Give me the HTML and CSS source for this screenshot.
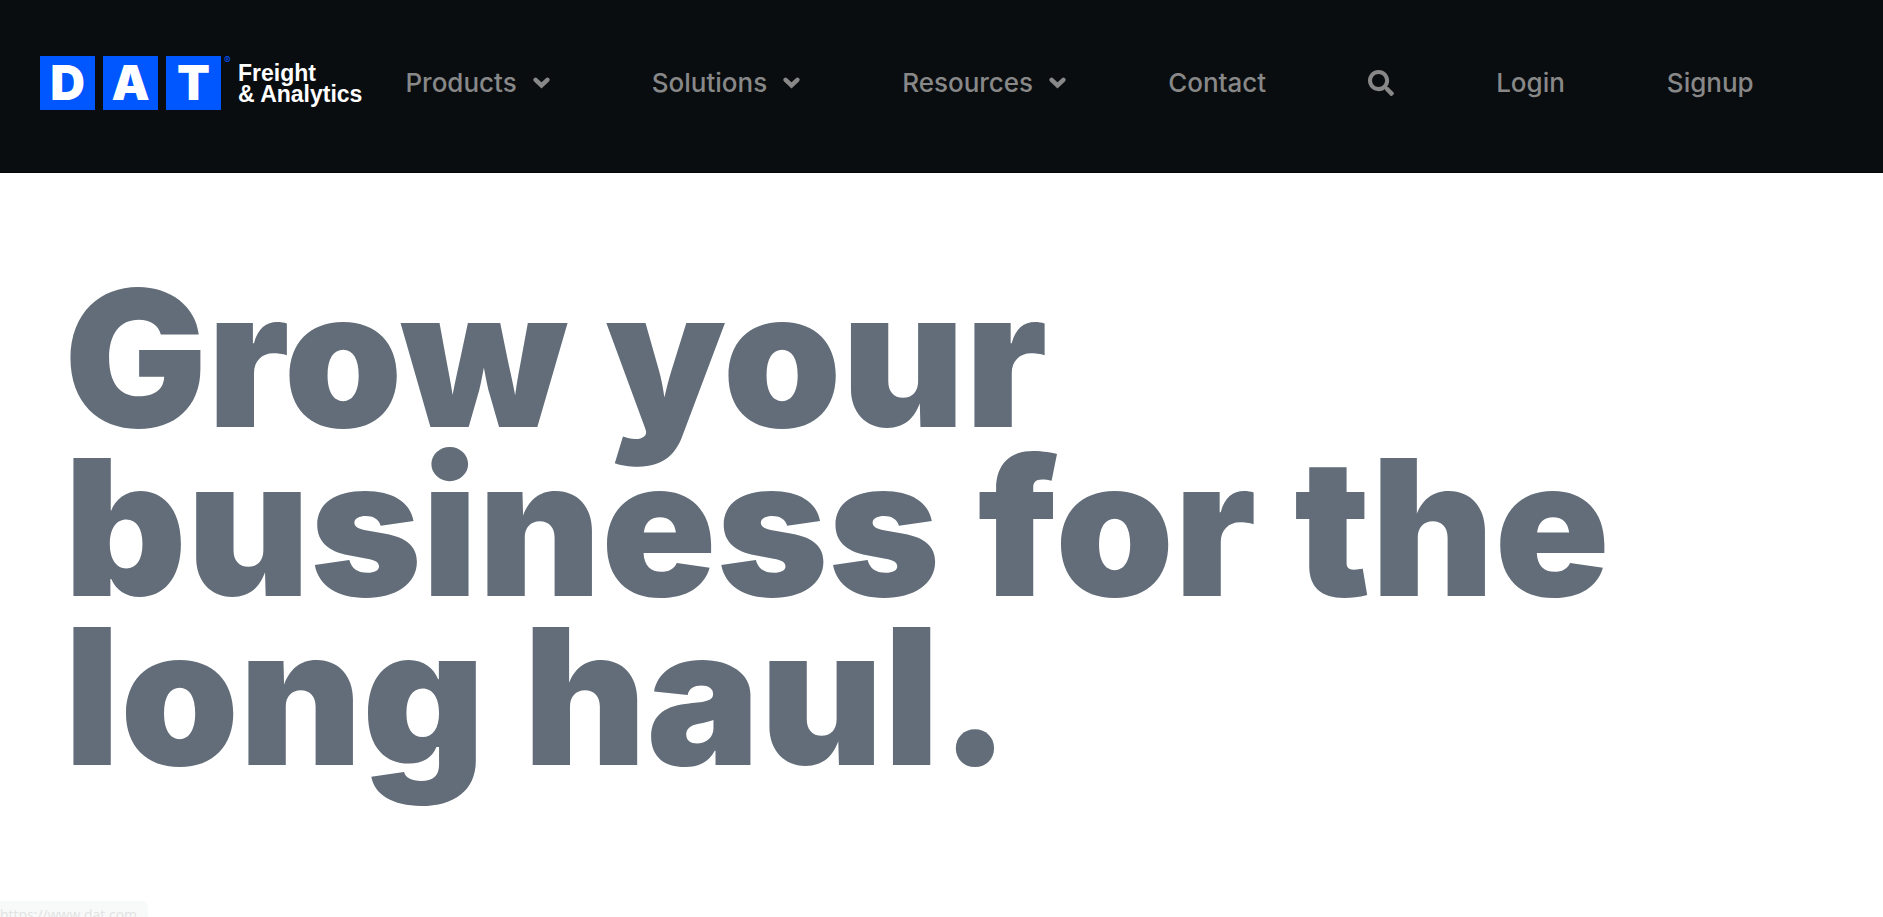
FILE: index.html
```html
<!DOCTYPE html>
<html lang="en">
<head>
<meta charset="utf-8">
<title>DAT Freight &amp; Analytics</title>
<link rel="stylesheet" href="styles.css">
</head>
<body>
<header class="header">
  <a class="logo" href="#">
    <span class="tiles"><span class="tile">D</span><span class="tile">A</span><span class="tile">T</span></span>
    <span class="mark">®</span>
    <span class="tagline">Freight<br>&amp; Analytics</span>
  </a>
  <nav class="nav">
    <button class="link" type="button">Products <svg class="chevron" viewBox="0 0 17 12"><path d="M2.600 2.800 8.500 8.400 14.400 2.800"/></svg></button>
    <button class="link" type="button">Solutions <svg class="chevron" viewBox="0 0 17 12"><path d="M2.600 2.800 8.500 8.400 14.400 2.800"/></svg></button>
    <button class="link" type="button">Resources <svg class="chevron" viewBox="0 0 17 12"><path d="M2.600 2.800 8.500 8.400 14.400 2.800"/></svg></button>
    <a class="link" href="#">Contact</a>
    <button class="link" type="button" aria-label="Search"><svg class="search" viewBox="0 0 512 512"><path d="M505 442.700 405.300 343c-4.500-4.500-10.600-7-17-7H372c27.600-35.300 44-79.700 44-128C416 93.100 322.900 0 208 0S0 93.100 0 208s93.100 208 208 208c48.300 0 92.700-16.400 128-44v16.300c0 6.400 2.500 12.500 7 17l99.700 99.700c9.400 9.400 24.600 9.400 33.900 0l28.300-28.300c9.400-9.400 9.400-24.600.1-34zM208 336c-70.700 0-128-57.200-128-128 0-70.700 57.200-128 128-128 70.700 0 128 57.200 128 128 0 70.700-57.200 128-128 128z"/></svg></button>
    <a class="link" href="#">Login</a>
    <a class="link" href="#">Signup</a>
  </nav>
</header>
<main class="hero">
  <h1 class="title">Grow your<br>business for the<br>long haul.</h1>
</main>
<div class="status">https://www.dat.com</div>
</body>
</html>
```

FILE: styles.css
```css
* { box-sizing: border-box; }
body {
  margin: 0;
  min-height: 100vh;
  position: relative;
  overflow: hidden;
  background: #fff;
  font-family: Inter, "Liberation Sans", sans-serif;
}
.header {
  display: flex;
  align-items: flex-start;
  padding: 56px 40px 62px;
  background: #090d10;
  border-bottom: 1px solid #04070a;
}
.logo {
  display: flex;
  flex: none;
  color: #fff;
  text-decoration: none;
}
.tiles { display: flex; gap: 8px; }
.tile {
  display: flex;
  align-items: center;
  justify-content: center;
  width: 55px;
  height: 54px;
  background: #0056ff;
  font-size: 48px;
  line-height: 54px;
  font-weight: 900;
}
.mark {
  width: 17px;
  padding-left: 3px;
  color: #0056ff;
  font-size: 10px;
  line-height: 8px;
}
.tagline {
  padding-top: 7px;
  padding-right: 43px;
  font: bold 23px/21px "Liberation Sans", sans-serif;
}
.nav {
  display: flex;
  align-items: center;
  gap: 102px;
  height: 54px;
}
.link {
  display: flex;
  align-items: center;
  gap: 16px;
  padding: 0;
  border: 0;
  background: none;
  color: #888;
  font: 500 26px/32px Inter, "Liberation Sans", sans-serif;
  text-decoration: none;
  white-space: nowrap;
}
.chevron {
  width: 17px;
  height: 12px;
  fill: none;
  stroke: #888;
  stroke-width: 4.4;
  stroke-linecap: round;
}
.search { width: 26px; height: 26px; fill: #888; }
.hero { padding: 101px 64px; }
.title {
  margin: 0;
  color: #626d79;
  font-size: 190px;
  line-height: 169px;
  font-weight: 900;
  white-space: nowrap;
}
.status {
  position: absolute;
  left: 0;
  bottom: -8px;
  height: 24px;
  padding-right: 11px;
  border-top-right-radius: 6px;
  background: #f8faf9;
  color: #e2e2e2;
  font: 14px/28px "Open Sans", "Noto Sans", sans-serif;
}
```
